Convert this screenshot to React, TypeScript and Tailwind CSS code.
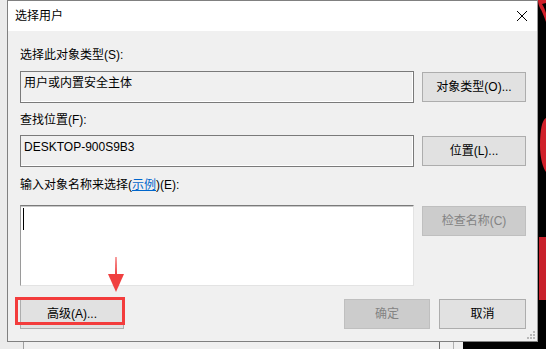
import React from "react";

const font = "font-['Liberation_Sans','Noto_Sans_CJK_SC',sans-serif]";

const Btn = ({ label, disabled, w = "w-[104px]" }: { label: string; disabled?: boolean; w?: string }) => (
  <div
    className={`${w} h-[30px] flex items-center justify-center border text-[12px] leading-[16px] ${
      disabled ? "bg-[#cccccc] border-[#bfbfbf] text-[#838383]" : "bg-[#e1e1e1] border-[#adadad] text-black"
    }`}
  >
    {label}
  </div>
);

const ReadBox = ({ value }: { value: string }) => (
  <div className="w-[394px] h-[32px] border border-[#7a7a7a] bg-[#f0f0f0] shadow-[inset_-1px_-1px_0_#ffffff] pl-[3px] pt-[3px] text-[12px] leading-[16px] text-black">
    {value}
  </div>
);

const App = () => {
  return (
    <div className={`relative w-[546px] h-[349px] overflow-hidden bg-black ${font}`}>
      <div className="flex h-[342px]">
        <div className="w-[7px] bg-[#ebebeb]" />
        <div className="w-[531px] flex flex-col border border-[#808080] border-r-[#9a9a9a]">
          <div className="h-[30px] bg-white flex items-center justify-between pl-[7px] pr-[8px]">
            <span className="text-[12px] leading-[16px] text-black">选择用户</span>
            <svg width="12" height="12" viewBox="0 0 12 12" className="mr-[1px]">
              <path d="M1 1 L11 11 M11 1 L1 11" stroke="#000" strokeWidth="1" />
            </svg>
          </div>
          <div className="relative flex-1 bg-[#f0f0f0] pl-[12px] pr-[11px] pt-[16px] text-[12px] leading-[16px] text-black">
            <div>选择此对象类型(S):</div>
            <div className="mt-[8px] flex items-center gap-[8px]">
              <ReadBox value="用户或内置安全主体" />
              <Btn label="对象类型(O)..." />
            </div>
            <div className="mt-[9px]">查找位置(F):</div>
            <div className="mt-[7px] flex items-center gap-[8px]">
              <ReadBox value="DESKTOP-900S9B3" />
              <Btn label="位置(L)..." />
            </div>
            <div className="mt-[10px]">
              输入对象名称来选择(<span className="text-[#0066cc] underline">示例</span>)(E):
            </div>
            <div className="mt-[12px] flex items-start gap-[8px]">
              <div className="w-[394px] h-[81px] bg-white border border-t-[#7a7a7a] border-l-[#9a9a9a] border-r-[#e3e3e3] border-b-[#e3e3e3] shadow-[inset_0_1px_0_#c8c8c8] pl-[2px] pt-[2px]">
                <div className="w-[1px] h-[22px] bg-black" />
              </div>
              <div className="mt-[1px]">
                <Btn label="检查名称(C)" disabled />
              </div>
            </div>
            <div className="mt-[13px] flex items-center">
              <Btn label="高级(A)..." />
              <div className="flex-1" />
              <Btn label="确定" disabled w="w-[86px]" />
              <div className="w-[9px]" />
              <Btn label="取消" w="w-[87px]" />
            </div>
            <svg width="9" height="9" viewBox="0 0 9 9" className="absolute right-[1px] bottom-[1px]">
              <rect x="6" y="0" width="2" height="2" fill="#b8b8b8" />
              <rect x="3" y="3" width="2" height="2" fill="#b8b8b8" />
              <rect x="6" y="3" width="2" height="2" fill="#b8b8b8" />
              <rect x="0" y="6" width="2" height="2" fill="#b8b8b8" />
              <rect x="3" y="6" width="2" height="2" fill="#b8b8b8" />
              <rect x="6" y="6" width="2" height="2" fill="#b8b8b8" />
            </svg>
          </div>
        </div>
        <div className="w-[8px] bg-black">
          <svg width="8" height="342" viewBox="0 0 8 342">
            <path d="M0 0 H8 V22 C6 16 4 11 2 8 C1 6 0 3 0 0 Z" fill="#d0202a" />
            <path d="M4 4 C6 7 7 10 8 13 V3 Z" fill="#000" />
            <path d="M8 118 C4 120 2 130 2 145 C2 158 5 168 8 172 Z" fill="#d0202a" />
            <path d="M1 237 H8 V300 H1 Z" fill="#c8202a" />
          </svg>
        </div>
      </div>
      <div className="flex h-[7px]">
        <div className="w-[23px] bg-[#ececec]" />
        <div className="w-[1px] bg-[#a0a0a0]" />
        <div className="w-[415px] bg-[#f0f0f0]" />
        <div className="w-[1px] bg-[#6d6d6d]" />
        <div className="w-[13px] bg-[#f0f0f0]" />
        <div className="w-[1px] bg-[#b0b0b0]" />
        <div className="w-[9px] bg-[#f0f0f0]" />
        <div className="flex-1 bg-black" />
      </div>
      <div className="absolute left-[15px] top-[297px] w-[110px] h-[28px] border-[3px] border-[#f33c3c]" />
      <svg width="18" height="36" viewBox="0 0 18 36" className="absolute left-[107px] top-[257px]">
        <path d="M8.5 0 H9.5 L10 18 H8 Z" fill="#f04040" />
        <path d="M1 17 L17 17 L9 35 Z" fill="#f04040" />
      </svg>
    </div>
  );
};

export default App;
